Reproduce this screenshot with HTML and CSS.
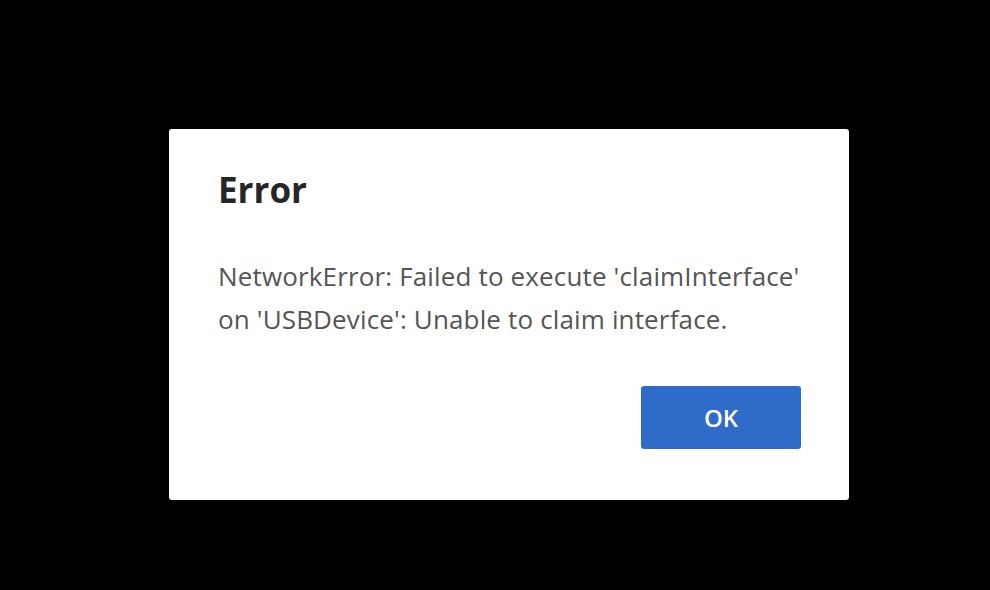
FILE: index.html
```html
<!DOCTYPE html>
<html>
<head>
<meta charset="utf-8">
<link rel="stylesheet" href="styles.css">
</head>
<body>
<div class="overlay">
  <div class="dialog">
    <h1 class="title">Error</h1>
    <p class="message">NetworkError: Failed to execute 'claimInterface' on 'USBDevice': Unable to claim interface.</p>
    <div class="actions">
      <button class="ok">OK</button>
    </div>
  </div>
</div>
</body>
</html>
```
FILE: styles.css
```css
html, body {
  margin: 0;
  padding: 0;
  background: #000;
  width: 990px;
  height: 590px;
  overflow: hidden;
}
.overlay {
  padding-top: 129px;
  padding-left: 169px;
}
.dialog {
  box-sizing: border-box;
  width: 680px;
  height: 371px;
  background: #fff;
  border-radius: 3px;
  padding: 0 48px 0 49px;
  font-family: "Open Sans", "Noto Sans", sans-serif;
  display: flex;
  flex-direction: column;
}
.title {
  margin: 38px 0 0;
  font-size: 35px;
  line-height: 46px;
  font-weight: 700;
  color: #262626;
}
.message {
  margin: 42px -10px 0 0;
  font-size: 26px;
  line-height: 43px;
  color: #555;
  letter-spacing: 0.15px;
}
.actions {
  display: flex;
  justify-content: flex-end;
  margin-top: 45px;
}
.ok {
  width: 160px;
  height: 63px;
  border: none;
  border-radius: 3px;
  background: #2f6bc8;
  color: #fff;
  font-family: "Open Sans", "Noto Sans", sans-serif;
  font-size: 24px;
  font-weight: 600;
  padding: 0;
}
```
